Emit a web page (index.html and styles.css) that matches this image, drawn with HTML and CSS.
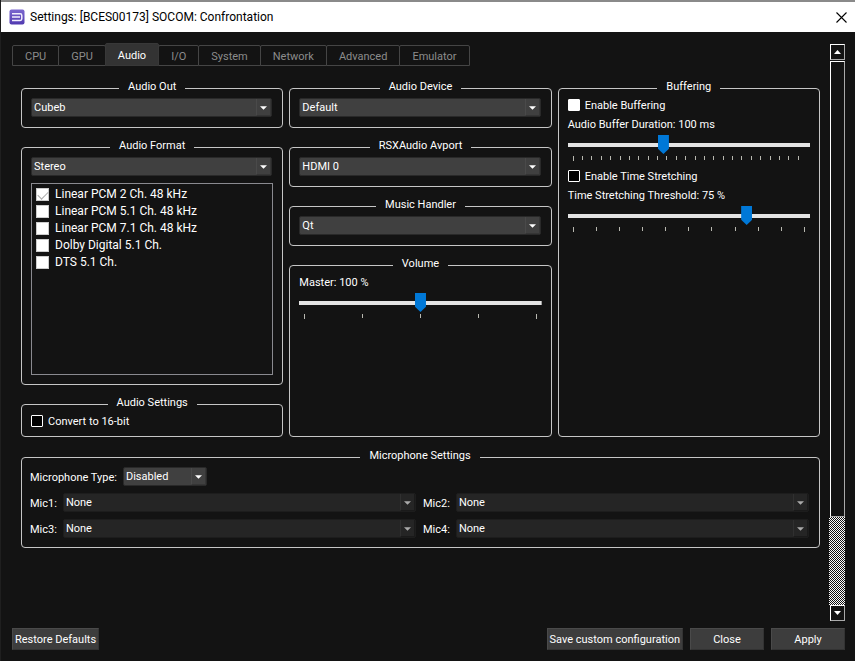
FILE: index.html
```html
<!DOCTYPE html>
<html lang="en">
<head>
<meta charset="utf-8">
<title>Settings: [BCES00173] SOCOM: Confrontation</title>
<link rel="stylesheet" href="styles.css">
</head>
<body>
<header class="titlebar">
  <svg class="app-icon" viewBox="0 0 16 16" aria-hidden="true"><defs><linearGradient id="g" x1="0" y1="0" x2="0" y2="1"><stop offset="0" stop-color="#7c68cf"/><stop offset="1" stop-color="#5039b0"/></linearGradient></defs><rect x=".5" y=".5" width="15" height="15" rx="2" fill="url(#g)"/><path d="M3 4.8h8.200q1.600 0 1.600 1.600v3.400q0 1.600-1.600 1.600H3M3 8.100h8" fill="none" stroke="#f2effd" stroke-width="1.5"/></svg>
  <h1>Settings: [BCES00173] SOCOM: Confrontation</h1>
  <button class="close" aria-label="Close window"><svg viewBox="0 0 11 11"><path d="M.5.5l10 10M10.500.5l-10 10" stroke="#000" stroke-width="1.1"/></svg></button>
</header>
<main class="body">
  <section class="content">
    <nav class="tabs">
      <button>CPU</button><button>GPU</button><button class="active">Audio</button><button>I/O</button><button>System</button><button>Network</button><button>Advanced</button><button>Emulator</button>
    </nav>
    <div class="panel">
      <div class="columns">
        <div class="column">
          <fieldset><legend>Audio Out</legend>
            <div class="combo"><select aria-label="Audio Out"><option>Cubeb</option></select><svg viewBox="0 0 8 4"><path d="M0 0h8L4 4z"/></svg></div>
          </fieldset>
          <fieldset class="grow"><legend>Audio Format</legend>
            <div class="combo"><select aria-label="Audio Format"><option>Stereo</option></select><svg viewBox="0 0 8 4"><path d="M0 0h8L4 4z"/></svg></div>
            <div class="list">
              <label><input type="checkbox" class="item" checked disabled>Linear PCM 2 Ch. 48 kHz</label>
              <label><input type="checkbox" class="item">Linear PCM 5.1 Ch. 48 kHz</label>
              <label><input type="checkbox" class="item">Linear PCM 7.1 Ch. 48 kHz</label>
              <label><input type="checkbox" class="item">Dolby Digital 5.1 Ch.</label>
              <label><input type="checkbox" class="item">DTS 5.1 Ch.</label>
            </div>
          </fieldset>
          <fieldset class="tight"><legend>Audio Settings</legend>
            <label class="check"><input type="checkbox">Convert to 16-bit</label>
          </fieldset>
        </div>
        <div class="column">
          <fieldset><legend>Audio Device</legend>
            <div class="combo"><select aria-label="Audio Device"><option>Default</option></select><svg viewBox="0 0 8 4"><path d="M0 0h8L4 4z"/></svg></div>
          </fieldset>
          <fieldset><legend>RSXAudio Avport</legend>
            <div class="combo"><select aria-label="RSXAudio Avport"><option>HDMI 0</option></select><svg viewBox="0 0 8 4"><path d="M0 0h8L4 4z"/></svg></div>
          </fieldset>
          <fieldset><legend>Music Handler</legend>
            <div class="combo"><select aria-label="Music Handler"><option>Qt</option></select><svg viewBox="0 0 8 4"><path d="M0 0h8L4 4z"/></svg></div>
          </fieldset>
          <fieldset class="grow tight"><legend>Volume</legend>
            <label class="caption" for="vol">Master: 100 %</label>
            <input type="range" id="vol" min="0" max="200" value="100">
            <div class="ticks"><i></i><i></i><i></i><i></i><i></i></div>
          </fieldset>
        </div>
        <div class="column">
          <fieldset class="grow tight"><legend>Buffering</legend>
            <label class="check"><input type="checkbox" checked>Enable Buffering</label>
            <label class="caption" for="buf">Audio Buffer Duration: 100 ms</label>
            <input type="range" id="buf" min="4" max="250" value="100">
            <div class="ticks partial"><i></i><i></i><i></i><i></i><i></i><i></i><i></i><i></i><i></i><i></i><i></i><i></i><i></i><i></i><i></i><i></i><i></i><i></i><i></i><i></i><i></i><i></i><i></i><i></i><i></i></div>
            <label class="check"><input type="checkbox">Enable Time Stretching</label>
            <label class="caption" for="str">Time Stretching Threshold: 75 %</label>
            <input type="range" id="str" min="0" max="100" value="75">
            <div class="ticks"><i></i><i></i><i></i><i></i><i></i><i></i><i></i><i></i><i></i><i></i><i></i></div>
          </fieldset>
        </div>
      </div>
      <fieldset class="mics"><legend>Microphone Settings</legend>
        <div class="mic-type"><label for="mt">Microphone Type:</label>
          <div class="combo short"><select id="mt"><option>Disabled</option></select><svg viewBox="0 0 8 4"><path d="M0 0h8L4 4z"/></svg></div></div>
        <div class="mic-grid">
          <label for="m1">Mic1:</label><div class="combo"><select id="m1" disabled><option>None</option></select><svg viewBox="0 0 8 4"><path d="M0 0h8L4 4z"/></svg></div>
          <label for="m2">Mic2:</label><div class="combo"><select id="m2" disabled><option>None</option></select><svg viewBox="0 0 8 4"><path d="M0 0h8L4 4z"/></svg></div>
          <label for="m3">Mic3:</label><div class="combo"><select id="m3" disabled><option>None</option></select><svg viewBox="0 0 8 4"><path d="M0 0h8L4 4z"/></svg></div>
          <label for="m4">Mic4:</label><div class="combo"><select id="m4" disabled><option>None</option></select><svg viewBox="0 0 8 4"><path d="M0 0h8L4 4z"/></svg></div>
        </div>
      </fieldset>
    </div>
  </section>
  <aside class="scrollbar">
    <button aria-label="Scroll up"><svg viewBox="0 0 8 5"><path d="M0 4h7L3.500 0z"/></svg></button>
    <div class="handle"></div>
    <div class="track"></div>
    <button aria-label="Scroll down"><svg viewBox="0 0 8 5"><path d="M0 0h7L3.500 4z"/></svg></button>
  </aside>
</main>
<footer class="actions">
  <button class="fit">Restore Defaults</button>
  <span class="spacer"></span>
  <button class="fit">Save custom configuration</button>
  <button>Close</button>
  <button>Apply</button>
</footer>
</body>
</html>
```
FILE: styles.css
```css
* { box-sizing: border-box; }

body {
  margin: 0;
  min-height: 100vh;
  display: flex;
  flex-direction: column;
  background: #131313;
  border-left: 1px solid #1f1f1f;
  color: #fff;
  font: 11px/13px Roboto, "Noto Sans", sans-serif;
}

button, select, input { font: inherit; color: inherit; margin: 0; }
button { padding: 0; }

.titlebar {
  display: flex;
  align-items: center;
  height: 32px;
  padding: 0 8px;
  border-top: 2px solid #8a8a8a;
  background: #fff;
  color: #000;
}
.titlebar h1 {
  flex: 1;
  margin: 0 0 0 5px;
  font: 12px/16px Roboto, sans-serif;
}
.app-icon { width: 16px; height: 16px; }
.close { display: flex; border: 0; background: none; }
.close svg { width: 11px; height: 11px; }

.body { flex: 1; display: flex; padding: 11px 10px 0 11px; }
.content { flex: 1; min-width: 0; }

.tabs { display: flex; align-items: flex-end; height: 23px; }
.tabs button {
  height: 21px;
  padding: 2px 12px 0;
  margin-right: -1px;
  border: 1px solid #454545;
  border-radius: 2px 2px 0 0;
  background: #131313;
  color: #8c8c8c;
}
.tabs .active {
  height: 23px;
  border-color: #383838;
  background: #333;
  color: #fff;
  z-index: 1;
}

.panel { padding: 15px 9px 0; }
.columns { display: grid; grid-template-columns: repeat(3, minmax(0, 1fr)); gap: 6px; }
.column { display: flex; flex-direction: column; gap: 12px; }

fieldset {
  min-width: 0;
  margin: 0;
  padding: 2px 9px 10px;
  border: 1px solid #c6c6c6;
  border-radius: 4px;
}
legend { margin: 0 auto; padding: 0 9px 4px; line-height: 11px; text-align: center; }
.grow { flex: 1; }
.tight { padding: 0 9px 6px; }

.combo { position: relative; margin-right: 1px; }
.combo select {
  display: block;
  width: 100%;
  height: 19px;
  padding: 0 18px 0 2px;
  border: 1px solid #292929;
  border-radius: 2px;
  background: #404040;
  appearance: none;
  opacity: 1;
}
.combo svg {
  position: absolute;
  top: 1px;
  right: 1px;
  width: 15px;
  height: 17px;
  padding: 7px 3px 5px;
  border: 1px solid #353535;
  border-width: 0 1px 1px;
  border-left-color: #4a4a4a;
  fill: #fff;
  pointer-events: none;
}
.combo select:disabled { background: #252525; border-color: #1d1d1d; }
.combo select:disabled + svg { fill: #aaa; border-color: #1a1a1a; border-left-color: #303030; }

.list {
  height: 192px;
  margin: 7px 0 -1px;
  padding: 2px 4px;
  border: 1px solid #8a8a90;
  font-size: 12px;
}
.list label { display: flex; align-items: center; gap: 6px; height: 17px; }

input[type="checkbox"] {
  appearance: none;
  width: 12px;
  height: 12px;
  border: 1px solid #fff;
  border-radius: 1px;
  background: #000;
}
input[type="checkbox"]:checked { background: #fff; }
input.item[type="checkbox"] { width: 13px; height: 13px; background: #fff; border-color: #ccc; border-radius: 0; }
input.item:checked::before {
  content: "";
  display: block;
  width: 9px;
  height: 5px;
  margin: 2px 1px;
  border: solid #aaa;
  border-width: 0 0 1px 1px;
  transform: rotate(-45deg);
}

.check { display: flex; align-items: center; gap: 5px; height: 18px; }
.check + .caption { margin-top: 1px; }
.caption { display: block; padding-top: 1px; line-height: 17px; }

input[type="range"] {
  appearance: none;
  display: block;
  width: 100%;
  height: 23px;
  background: linear-gradient(#e4e4e4, #e4e4e4) center / 100% 4px no-repeat;
}
input[type="range"]::-webkit-slider-thumb {
  appearance: none;
  width: 11px;
  height: 19px;
  background: #0078d7;
  clip-path: polygon(0 0, 100% 0, 100% 72%, 50% 100%, 0 72%);
}

.ticks { display: flex; justify-content: space-between; height: 5px; margin: 0 5px 6px; }
.ticks i { width: 1px; height: 4px; background: #b8b8b0; }
.ticks i:first-child, .ticks i:last-child { height: 5px; }
.partial { margin-right: 11px; }
.partial i:last-child { height: 4px; }

.mics { margin-top: 13px; padding: 2px 9px 9px 8px; }
.mic-type { display: flex; align-items: center; gap: 6px; }
.short { width: 84px; }
.mic-grid {
  display: grid;
  grid-template-columns: auto minmax(0, 1fr) auto minmax(0, 1fr);
  gap: 7px 6px;
  align-items: center;
  margin-top: 7px;
}
.mics label { padding-top: 2px; }

.scrollbar { display: flex; flex-direction: column; width: 16px; margin-top: 1px; }
.scrollbar button, .handle {
  border: 1px solid #fff;
  border-right-color: #aaa;
  border-bottom-color: #aaa;
  background: #131313;
  margin: 0 0 1px 1px;
}
.scrollbar button { display: grid; place-items: center; height: 16px; }
.scrollbar svg { width: 8px; height: 5px; fill: #fff; }
.handle { flex: 456; margin-bottom: 0; }
.track { flex: 88; background: repeating-conic-gradient(#fff 0 25%, #131313 0 50%) 0 0 / 2px 2px; }

.actions { display: flex; gap: 7px; padding: 6px 10px 11px 11px; }
.actions button {
  width: 74px;
  height: 22px;
  padding-top: 1px;
  border: 1px solid #4a4a4a;
  border-right-color: #333;
  border-bottom-color: #333;
  background: #3d3d3d;
}
.actions .fit { width: auto; padding: 1px 2px 0; }
.spacer { flex: 1; }
```
